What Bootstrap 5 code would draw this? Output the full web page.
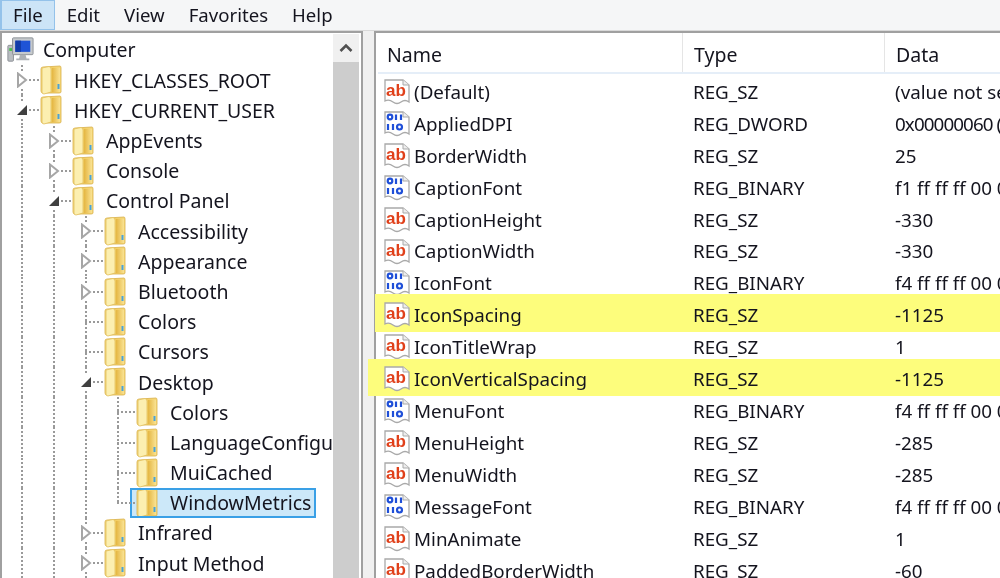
<!DOCTYPE html>
<html lang="en">
  <head>
    <meta charset="UTF-8" />
    <title>Registry Editor</title>
    <link href="https://cdn.jsdelivr.net/npm/bootstrap@5.3.3/dist/css/bootstrap.min.css" rel="stylesheet" />
    <style>
      html, body { height: 578px; overflow: hidden; }
      body { font-family: "Noto Sans", "Liberation Sans", sans-serif; font-size: 19.500px; color: #14141e; background: #f0f0f0; filter: blur(.35px); }
      .menu-bar { height: 31px; background: #f5f6f7; border-bottom: 1px solid #d9d9d9; font-size: 18.600px; }
      .menu-item { padding: 0 12px; line-height: 30px; }
      .menu-item.active { background: #cce4f7; border: 1px solid #94c2ea; border-left-width: 2px; line-height: 28px; padding: 0 11px; }
      .panes { height: 547px; gap: 11px; }
      .tree-pane { width: 363px; border: 2px solid #a0a0a0; border-bottom: 0; background: #fff; }
      .tree { flex: 1; min-width: 0; padding: 2px 0 0 5px; overflow: hidden; }
      .tree-row { height: 30.2px; white-space: nowrap; }
      .guide { width: 32px; height: 100%; flex: none; }
      .guide.on { background: repeating-linear-gradient(#9a9a9a 0 2px, transparent 2px 4px) 14px 0 / 2px 100% no-repeat; }
      .slot { width: 32px; height: 100%; flex: none; position: relative; }
      .slot.branch { background: repeating-linear-gradient(90deg, #9a9a9a 0 2px, transparent 2px 4px) 14px 50% / 18px 2px no-repeat; }
      .slot.branch::before { content: ""; position: absolute; left: 14px; top: 0; height: 100%; width: 2px; background: repeating-linear-gradient(#9a9a9a 0 2px, transparent 2px 4px); }
      .slot.last::before { height: 50%; }
      .slot svg { position: absolute; left: 9px; top: 7px; background: #fff; }
      .folder { width: 22px; height: 30px; flex: none; margin-left: 1px; }
      .tree-label { margin-left: 12px; }
      .computer { margin: 0 9px 0 -1px; flex-shrink: 0; }
      .sel-box { background: #cce8f9; outline: 2px solid #3aa0e6; outline-offset: -2px; height: 30px; margin-left: -5px; padding: 0 5px 0 5px; }
      .scroll { width: 26px; margin-right: 2px; margin-top: 1px; background: #cdcdcd; }
      .scroll-btn { height: 28px; background: #f0f0f0; }
      .list-pane { flex: 1; min-width: 0; border: 2px solid #a0a0a0; border-right: 0; border-bottom: 0; background: #fff; font-size: 18.800px; }
      .list-head { height: 41px; border-bottom: 2px solid #e5eef8; margin-left: 2px; font-size: 19.500px; }
      .cell-name { width: 305px; flex: none; }
      .cell-type { width: 202px; flex: none; }
      .list-head .cell-name, .list-head .cell-type, .list-head .cell-data { padding: 3px 0 0 9px; height: 100%; line-height: 37px; }
      .list-head .cell-name, .list-head .cell-type { border-right: 1px solid #e5e5e5; }
      .list-head .cell-type, .list-head .cell-data { padding-left: 11px; }
      .rows { padding-top: 2px; }
      .list-row { height: 31.93px; position: relative; white-space: nowrap; z-index: 0; }
      .list-row .cell-name { padding-left: 7px; }
      .list-row .cell-type { padding-left: 12px; }
      .list-row .cell-data { padding-left: 12px; }
      .list-row .cell-data.tight { letter-spacing: -.9px; }
      .list-row svg { flex: none; margin-right: 3px; }
      .hl::before { content: ""; position: absolute; z-index: -1; background: #fdfd7c; left: -1px; right: 0; top: -5px; bottom: -1px; }
      .hl.wide::before { left: -8px; top: -4px; }
    </style>
    <script src="https://cdn.jsdelivr.net/npm/bootstrap@5.3.3/dist/js/bootstrap.bundle.min.js"></script>
  </head>
  <body>
    <svg width="0" height="0" class="d-block">
      <defs>
        <linearGradient id="fold" x1="0" y1="0" x2="1" y2="0">
          <stop offset="0" stop-color="#fbe08a" />
          <stop offset="0.5" stop-color="#f2cc60" />
          <stop offset="1" stop-color="#f7da7c" />
        </linearGradient>
        <linearGradient id="flap" x1="0" y1="0" x2="1" y2="0">
          <stop offset="0" stop-color="#e2b23c" />
          <stop offset="1" stop-color="#fae497" />
        </linearGradient>
        <symbol id="folder" viewBox="0 0 22 30">
          <path d="M3 2 L20 1 Q21 1 21 3 V27 Q21 28 19 28 H3 Q1 28 1 26 V4 Q1 2 3 2Z" fill="url(#fold)" stroke="#d8b04a" stroke-width=".8" />
          <path d="M2 3 L9 1.500 Q11 2 11 4 V27 L4 29 Q2 29 2 27Z" fill="#fcefb0" stroke="#e2c05e" stroke-width=".8" />
          <path d="M12 3 H20 V27 H12Z" fill="url(#flap)" opacity=".85" />
          <rect x="17.500" y="19" width="2" height="5" fill="#4aa3d6" />
        </symbol>
        <symbol id="sz" viewBox="0 0 28 28">
          <path d="M2 2 H20 L26 7 V24 Q22 21 18 24 T10 24 T2 23Z" fill="#fff" stroke="#a9a9a9" stroke-width="1.300" />
          <path d="M20 2 V7 H26" fill="#eee" stroke="#a9a9a9" stroke-width="1" />
          <text x="3" y="18" font-family="Liberation Sans, sans-serif" font-weight="700" font-size="17" fill="#e0401a">ab</text>
        </symbol>
        <symbol id="bin" viewBox="0 0 28 28">
          <path d="M2 2 H20 L26 7 V24 Q22 21 18 24 T10 24 T2 23Z" fill="#fff" stroke="#a9a9a9" stroke-width="1.300" />
          <path d="M20 2 V7 H26" fill="#eee" stroke="#a9a9a9" stroke-width="1" />
          <g fill="none" stroke="#1f4fd8" stroke-width="2.200">
            <circle cx="7" cy="7" r="2.300" /><path d="M13 4.500 V10 M18 4.500 V10" />
            <path d="M5 14 V20 M10 14 V20" /><circle cx="16.500" cy="17" r="2.500" />
          </g>
        </symbol>
        <symbol id="pc" viewBox="0 0 30 28">
          <rect x="2" y="9" width="6" height="17" rx="1" fill="#b9bdc1" stroke="#8b8f94" />
          <rect x="3.500" y="12" width="3" height="3" fill="#46c24a" />
          <rect x="7" y="1" width="22" height="18" rx="1" fill="#c6cacd" stroke="#8b8f94" />
          <rect x="10" y="4" width="16" height="12" fill="#1f54d6" />
          <rect x="10" y="4" width="6" height="12" fill="#123ca8" />
          <path d="M15 19 h6 l1 4 h3 v2 h-14 v-2 h3z" fill="#aeb2b6" />
        </symbol>
      </defs>
    </svg>

    <div class="menu-bar d-flex" id="menu"></div>
    <div class="panes d-flex">
      <div class="tree-pane d-flex">
        <div class="tree" id="tree"></div>
        <div class="scroll">
          <div class="scroll-btn d-flex align-items-center justify-content-center">
            <svg width="14" height="10" viewBox="0 0 14 10"><path d="M1.500 8 L7 2.500 L12.500 8" fill="none" stroke="#505050" stroke-width="2.600" /></svg>
          </div>
        </div>
      </div>
      <div class="list-pane">
        <div class="list-head d-flex">
          <div class="cell-name">Name</div>
          <div class="cell-type">Type</div>
          <div class="cell-data">Data</div>
        </div>
        <div class="rows" id="rows"></div>
      </div>
    </div>

    <script>
      const menu = ["File", "Edit", "View", "Favorites", "Help"];
      document.getElementById("menu").innerHTML = menu
        .map(function (m, i) {
          return `<div class="menu-item ${i === 0 ? "active" : ""}">${m}</div>`;
        })
        .join("");

      // guides: which ancestor levels still have a dotted line, state: open, closed or leaf
      const tree = [
        { name: "HKEY_CLASSES_ROOT", level: 0, state: "closed", guides: [] },
        { name: "HKEY_CURRENT_USER", level: 0, state: "open", guides: [] },
        { name: "AppEvents", level: 1, state: "closed", guides: [0] },
        { name: "Console", level: 1, state: "closed", guides: [0] },
        { name: "Control Panel", level: 1, state: "open", guides: [0] },
        { name: "Accessibility", level: 2, state: "closed", guides: [0, 1] },
        { name: "Appearance", level: 2, state: "closed", guides: [0, 1] },
        { name: "Bluetooth", level: 2, state: "closed", guides: [0, 1] },
        { name: "Colors", level: 2, state: "leaf", guides: [0, 1] },
        { name: "Cursors", level: 2, state: "leaf", guides: [0, 1] },
        { name: "Desktop", level: 2, state: "open", guides: [0, 1] },
        { name: "Colors", level: 3, state: "leaf", guides: [0, 1, 2] },
        { name: "LanguageConfigu", level: 3, state: "leaf", guides: [0, 1, 2] },
        { name: "MuiCached", level: 3, state: "leaf", guides: [0, 1, 2] },
        { name: "WindowMetrics", level: 3, state: "leaf", guides: [0, 1, 2], selected: true, last: true },
        { name: "Infrared", level: 2, state: "closed", guides: [0, 1] },
        { name: "Input Method", level: 2, state: "closed", guides: [0, 1] },
      ];

      const closedArrow = `<svg width="12" height="16" viewBox="0 0 12 16"><path d="M2 1.500 L10 8 L2 14.500Z" fill="#fff" stroke="#a6a6a6" stroke-width="2" /></svg>`;
      const openArrow = `<svg width="12" height="16" viewBox="0 0 12 16"><path d="M11 3 V13 H1Z" fill="#404040" /></svg>`;

      function treeRow(item) {
        let cells = "";
        for (let i = 0; i < item.level; i++) {
          cells += `<span class="guide ${item.guides.includes(i) ? "on" : ""}"></span>`;
        }
        const arrow = item.state === "leaf" ? "" : item.state === "open" ? openArrow : closedArrow;
        const folder = `<svg class="folder"><use href="#folder" /></svg>`;
        const label = `<span class="tree-label">${item.name}</span>`;
        return `
          <div class="tree-row d-flex align-items-center">
            ${cells}
            <span class="slot branch ${item.last ? "last" : ""}">${arrow}</span>
            ${item.selected ? `<span class="sel-box d-flex align-items-center">${folder}${label}</span>` : folder + label}
          </div>`;
      }

      document.getElementById("tree").innerHTML =
        `<div class="tree-row d-flex align-items-center">
          <svg width="28" height="28" class="computer"><use href="#pc" /></svg>
          <span>Computer</span>
        </div>` + tree.map(treeRow).join("");

      const rows = [
        ["(Default)", "REG_SZ", "(value not set)"],
        ["AppliedDPI", "REG_DWORD", "0x00000060 (96)"],
        ["BorderWidth", "REG_SZ", "25"],
        ["CaptionFont", "REG_BINARY", "f1 ff ff ff 00 00 00"],
        ["CaptionHeight", "REG_SZ", "-330"],
        ["CaptionWidth", "REG_SZ", "-330"],
        ["IconFont", "REG_BINARY", "f4 ff ff ff 00 00 00"],
        ["IconSpacing", "REG_SZ", "-1125", "hl"],
        ["IconTitleWrap", "REG_SZ", "1"],
        ["IconVerticalSpacing", "REG_SZ", "-1125", "hl wide"],
        ["MenuFont", "REG_BINARY", "f4 ff ff ff 00 00 00"],
        ["MenuHeight", "REG_SZ", "-285"],
        ["MenuWidth", "REG_SZ", "-285"],
        ["MessageFont", "REG_BINARY", "f4 ff ff ff 00 00 00"],
        ["MinAnimate", "REG_SZ", "1"],
        ["PaddedBorderWidth", "REG_SZ", "-60"],
      ];

      document.getElementById("rows").innerHTML = rows
        .map(function (r) {
          const icon = r[1] === "REG_SZ" ? "sz" : "bin";
          const tight = r[2].startsWith("0x") ? "tight" : "";
          return `
            <div class="list-row d-flex align-items-center ${r[3] || ""}">
              <div class="cell-name d-flex align-items-center"><svg width="28" height="28"><use href="#${icon}" /></svg>${r[0]}</div>
              <div class="cell-type">${r[1]}</div>
              <div class="cell-data ${tight}">${r[2]}</div>
            </div>`;
        })
        .join("");
    </script>
  </body>
</html>
